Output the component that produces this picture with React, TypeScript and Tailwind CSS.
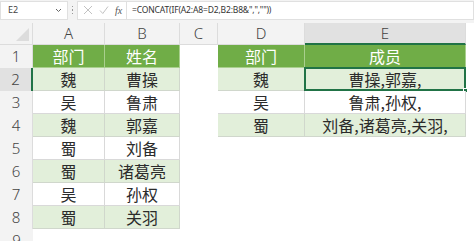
import React from 'react';

const cjk = { fontFamily: '"Noto Sans CJK SC", "Noto Sans", sans-serif' };
const ui = { fontFamily: '"Noto Sans", "Liberation Sans", sans-serif' };

const widths = ['w-[33px]', 'w-[72px]', 'w-[75px]', 'w-[38px]', 'w-[87px]', 'w-[161px]'];

type Kind = 'head' | 'green' | 'white' | 'empty';

const rows: { n: number; cells: [string, Kind][] }[] = [
  { n: 1, cells: [['部门', 'head'], ['姓名', 'head'], ['', 'empty'], ['部门', 'head'], ['成员', 'head']] },
  { n: 2, cells: [['魏', 'green'], ['曹操', 'green'], ['', 'empty'], ['魏', 'green'], ['曹操,郭嘉,', 'green']] },
  { n: 3, cells: [['吴', 'white'], ['鲁肃', 'white'], ['', 'empty'], ['吴', 'white'], ['鲁肃,孙权,', 'white']] },
  { n: 4, cells: [['魏', 'green'], ['郭嘉', 'green'], ['', 'empty'], ['蜀', 'green'], ['刘备,诸葛亮,关羽,', 'green']] },
  { n: 5, cells: [['蜀', 'white'], ['刘备', 'white'], ['', 'empty'], ['', 'empty'], ['', 'empty']] },
  { n: 6, cells: [['蜀', 'green'], ['诸葛亮', 'green'], ['', 'empty'], ['', 'empty'], ['', 'empty']] },
  { n: 7, cells: [['吴', 'white'], ['孙权', 'white'], ['', 'empty'], ['', 'empty'], ['', 'empty']] },
  { n: 8, cells: [['蜀', 'green'], ['关羽', 'green'], ['', 'empty'], ['', 'empty'], ['', 'empty']] },
];

const kindClass: Record<Kind, string> = {
  head: 'bg-[#70ad47] text-white border-r border-b border-[#a9cf8e]',
  green: 'bg-[#e2efda] text-[#2b2b2b] border-r border-b border-[#d0d7cc]',
  white: 'bg-white text-[#2b2b2b] border-r border-b border-[#d9d9d9]',
  empty: 'bg-white',
};

function FormulaBar() {
  return (
    <div className="flex h-[20px] items-center bg-[#f3f3f3] text-[#444]" style={ui}>
      <div className="flex h-[19px] w-[68px] items-center justify-between border border-[#e0e0e0] bg-white pl-[7px] pr-[5px] text-[9px]">
        <span>E2</span>
        <svg width="7" height="5" viewBox="0 0 7 5">
          <path d="M1 1 L3.5 3.5 L6 1" fill="none" stroke="#666" strokeWidth="1" />
        </svg>
      </div>
      <div className="flex w-[9px] flex-col items-center gap-[2px]">
        <span className="h-[1.5px] w-[1.5px] bg-[#999]" />
        <span className="h-[1.5px] w-[1.5px] bg-[#999]" />
        <span className="h-[1.5px] w-[1.5px] bg-[#999]" />
      </div>
      <div className="flex h-[19px] flex-1 items-center border border-[#e0e0e0] bg-white">
        <div className="flex w-[48px] items-center gap-[6px] pl-[5px]">
          <svg width="10" height="10" viewBox="0 0 10 10">
            <path d="M1 1 L9 9 M9 1 L1 9" stroke="#bbb" strokeWidth="0.9" />
          </svg>
          <svg width="10" height="10" viewBox="0 0 10 10">
            <path d="M1 5.5 L3.8 8.5 L9 1.5" fill="none" stroke="#bbb" strokeWidth="0.9" />
          </svg>
          <span className="text-[10px] italic text-[#555]" style={{ fontFamily: '"Liberation Serif", serif' }}>
            fx
          </span>
        </div>
        <div className="h-full w-px bg-[#e0e0e0]" />
        <span className="pl-[5px] text-[8.5px] tracking-[-0.15px] text-[#333]">
          =CONCAT(IF(A2:A8=D2,B2:B8&amp;&quot;,&quot;,&quot;&quot;))
        </span>
      </div>
    </div>
  );
}

function ColumnHeaders() {
  const labels = ['A', 'B', 'C', 'D', 'E'];
  return (
    <div className="flex h-[22px] bg-[#f3f3f3]" style={ui}>
      <div className={`${widths[0]} relative border-r border-b border-[#dcdcdc]`}>
        <svg className="absolute right-[3px] bottom-[3px]" width="13" height="13" viewBox="0 0 13 13">
          <path d="M13 0 L13 13 L0 13 Z" fill="#dcdcdc" />
        </svg>
      </div>
      {labels.map((l, i) => (
        <div
          key={l}
          className={`${widths[i + 1]} flex items-center justify-center text-[15px] font-light text-[#444] ${
            l === 'E'
              ? 'bg-[#e1e1e1] border-b-2 border-b-[#217346] border-r border-r-[#dcdcdc]'
              : 'border-r border-b border-[#dcdcdc]'
          }`}
        >
          {l}
        </div>
      ))}
      <div className="flex-1 bg-white" />
    </div>
  );
}

export default function App() {
  return (
    <div className="h-[241px] w-[474px] overflow-hidden bg-white">
      <FormulaBar />
      <div className="h-[3px] bg-[#f3f3f3]" />
      <ColumnHeaders />
      {rows.map((r) => (
        <div key={r.n} className="flex h-[23px]">
          <div
            className={`${widths[0]} flex items-center justify-center text-[15px] font-light text-[#444] ${
              r.n === 2
                ? 'bg-[#e1e1e1] border-r-2 border-r-[#217346]'
                : 'bg-[#f3f3f3] border-r border-[#dcdcdc]'
            }`}
            style={ui}
          >
            {r.n}
          </div>
          {r.cells.map(([text, kind], i) => (
            <div
              key={i}
              className={`${widths[i + 1]} relative flex items-center justify-center text-[16px] leading-none ${kindClass[kind]}`}
              style={cjk}
            >
              {text}
              {r.n === 2 && i === 4 && (
                <>
                  <div className="absolute inset-[-1px] border-2 border-[#217346]" />
                  <div className="absolute right-[-3px] bottom-[-3px] h-[5px] w-[5px] border border-white bg-[#217346]" />
                </>
              )}
            </div>
          ))}
          <div className="flex-1 bg-white" />
        </div>
      ))}
      <div className="flex h-[23px]">
        <div className={`${widths[0]} flex items-center justify-center bg-[#f3f3f3] text-[15px] font-light text-[#444]`} style={ui}>
          9
        </div>
        <div className="flex-1 bg-white" />
      </div>
    </div>
  );
}
